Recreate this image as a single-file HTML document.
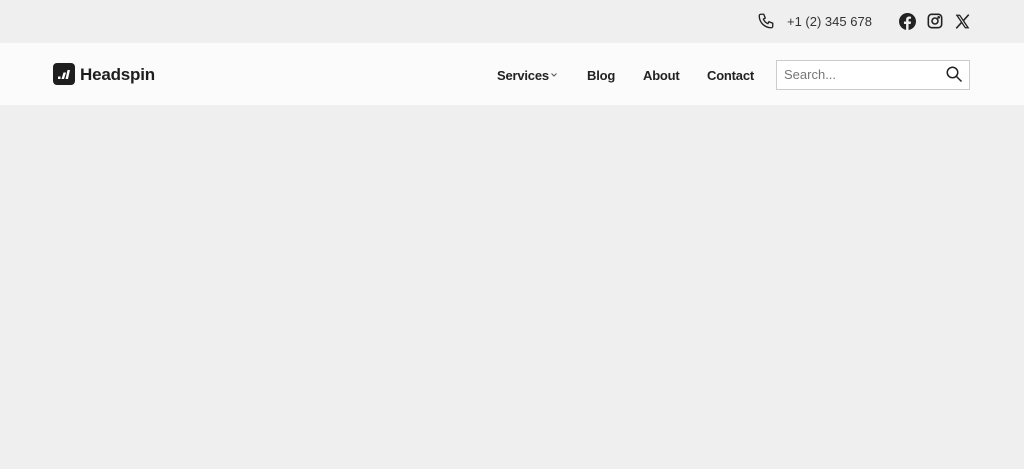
<!DOCTYPE html>
<html><head><style>
body{margin:0;width:1024px;height:469px;background:#efefef;font-family:"Liberation Sans",sans-serif;position:relative;overflow:hidden}
.top{position:absolute;top:0;left:0;right:0;height:43px}
.nav{position:absolute;top:43px;left:0;right:0;height:62px;background:#fbfbfb}
.a{position:absolute;color:#222}
</style></head><body>
<div class="top">
<svg class="a" style="left:757px;top:12px" width="18" height="18" viewBox="0 0 24 24" fill="none" stroke="#222" stroke-width="1.8"><path d="M5 3h4l2 5-2.5 1.5a11 11 0 0 0 6 6L16 13l5 2v4a2 2 0 0 1-2 2A16 16 0 0 1 3 5a2 2 0 0 1 2-2z"/></svg>
<div class="a" style="left:787px;top:14px;font-size:13px;color:#333">+1 (2) 345 678</div>
<svg class="a" style="left:899px;top:13px" width="17" height="17" viewBox="0 0 24 24"><circle cx="12" cy="12" r="12" fill="#222"/><path d="M13.5 24v-8.5h3l.5-3.5h-3.5v-2c0-1 .4-1.8 1.8-1.8H17V5.2c-.4 0-1.5-.2-2.7-.2-2.6 0-4.3 1.6-4.3 4.5V12H7v3.5h3V24z" fill="#efefef"/></svg>
<svg class="a" style="left:927px;top:13px" width="16" height="16" viewBox="0 0 24 24" fill="none" stroke="#222" stroke-width="2.4"><rect x="2" y="2" width="20" height="20" rx="5"/><circle cx="12" cy="12" r="4.5"/><circle cx="17.5" cy="6.5" r=".8" fill="#222"/></svg>
<svg class="a" style="left:955px;top:14px" width="15" height="15" viewBox="0 0 24 24"><path d="M1 1h7l15 22h-7z" fill="#222"/><path d="M2 23L10.5 13.5M13.5 10.5L22 1" stroke="#222" stroke-width="2.5"/><path d="M5 3h2l12 18h-2z" fill="#efefef"/></svg>
</div>
<div class="nav">
<svg class="a" style="left:53px;top:20px" width="22" height="22" viewBox="0 0 22 22"><rect width="22" height="22" rx="4" fill="#1e1e1e"/><path d="M5 16h2.5v-2.5H5zM8.5 16h2.5l2-6.5h-2.5zM12.5 16h2.5l2-9h-2.5z" fill="#fff"/></svg>
<div class="a" style="left:80px;top:22px;font-size:17px;font-weight:bold;color:#1e1e1e;letter-spacing:-0.2px">Headspin</div>
<div class="a" style="left:497px;top:25px;font-size:13px;font-weight:bold;letter-spacing:-0.2px">Services</div>
<svg class="a" style="left:551px;top:30px" width="6" height="4" viewBox="0 0 6 4" fill="none" stroke="#555" stroke-width="1"><path d="M.5.5L3 3 5.5.5"/></svg>
<div class="a" style="left:587px;top:25px;font-size:13px;font-weight:bold;letter-spacing:-0.2px">Blog</div>
<div class="a" style="left:643px;top:25px;font-size:13px;font-weight:bold;letter-spacing:-0.2px">About</div>
<div class="a" style="left:707px;top:25px;font-size:13px;font-weight:bold;letter-spacing:-0.2px">Contact</div>
<div class="a" style="left:776px;top:17px;width:192px;height:28px;border:1px solid #ccc;background:#fff"></div>
<div class="a" style="left:784px;top:24px;font-size:13px;color:#777">Search...</div>
<svg class="a" style="left:945px;top:22px" width="18" height="18" viewBox="0 0 24 24" fill="none" stroke="#222" stroke-width="2"><circle cx="10" cy="10" r="7"/><path d="M15 15l7 7"/></svg>
</div>
</body></html>
